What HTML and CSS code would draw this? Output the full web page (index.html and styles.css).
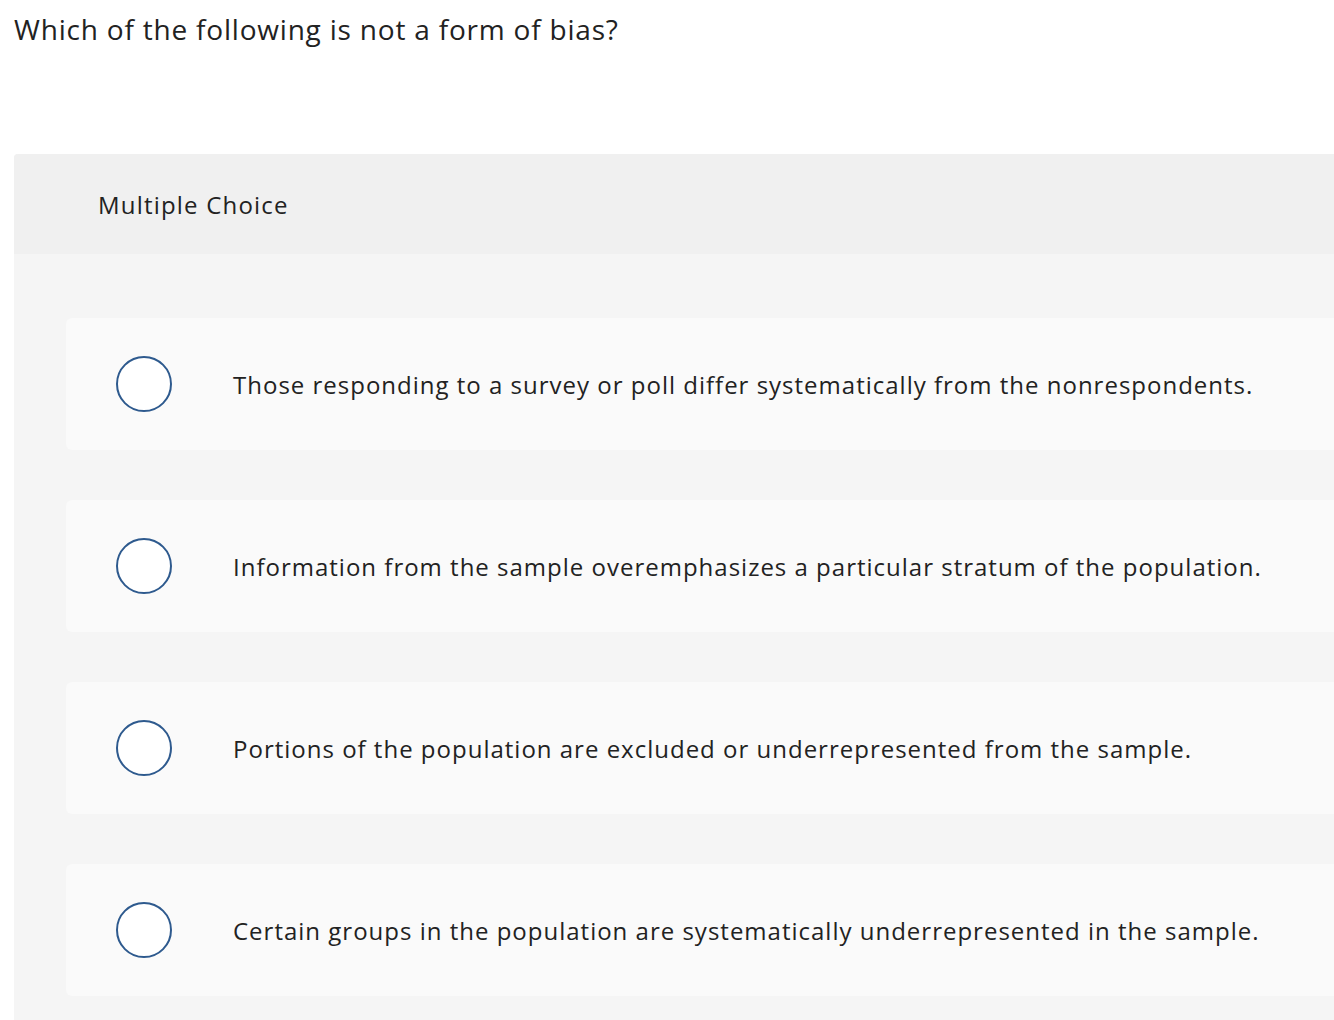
FILE: index.html
```html
<!DOCTYPE html>
<html>
<head>
<meta charset="utf-8">
<link rel="stylesheet" href="styles.css">
</head>
<body>
<div class="page">
  <h1 class="question">Which of the following is not a form of bias?</h1>
  <div class="panel">
    <div class="panel-header">Multiple Choice</div>
    <div class="panel-body">
      <div class="option"><span class="radio"></span><span class="label">Those responding to a survey or poll differ systematically from the nonrespondents.</span></div>
      <div class="option"><span class="radio"></span><span class="label">Information from the sample overemphasizes a particular stratum of the population.</span></div>
      <div class="option"><span class="radio"></span><span class="label">Portions of the population are excluded or underrepresented from the sample.</span></div>
      <div class="option"><span class="radio"></span><span class="label">Certain groups in the population are systematically underrepresented in the sample.</span></div>
    </div>
  </div>
</div>
</body>
</html>
```

FILE: styles.css
```css
html, body {
  margin: 0;
  padding: 0;
  background: #ffffff;
  overflow: hidden;
}
body {
  font-family: "Open Sans", "Lato", sans-serif;
  color: #222222;
}
.page {
  width: 1334px;
  height: 1020px;
  overflow: hidden;
}
.question {
  margin: 0;
  padding: 11px 0 0 14px;
  height: 154px;
  box-sizing: border-box;
  font-size: 28px;
  font-weight: 400;
  line-height: 36px;
  letter-spacing: 0.8px;
  color: #222;
}
.panel {
  margin-left: 14px;
  width: 1360px;
  border-radius: 4px 0 0 0;
  overflow: hidden;
  background: #f5f5f5;
}
.panel-header {
  height: 100px;
  background: #f0f0f0;
  display: flex;
  align-items: center;
  padding-left: 84px;
  font-size: 24px;
  letter-spacing: 1.2px;
  color: #222;
}
.panel-body {
  padding: 64px 0 30px 52px;
  display: flex;
  flex-direction: column;
  gap: 50px;
}
.option {
  height: 132px;
  background: #fafafa;
  border-radius: 6px 0 0 6px;
  display: flex;
  align-items: center;
  padding-left: 50px;
}
.radio {
  width: 52px;
  height: 52px;
  border: 2px solid #2e5a8e;
  border-radius: 50%;
  background: #ffffff;
  flex: none;
}
.label {
  margin-left: 61px;
  font-size: 24px;
  letter-spacing: 1px;
  color: #222;
}
```
